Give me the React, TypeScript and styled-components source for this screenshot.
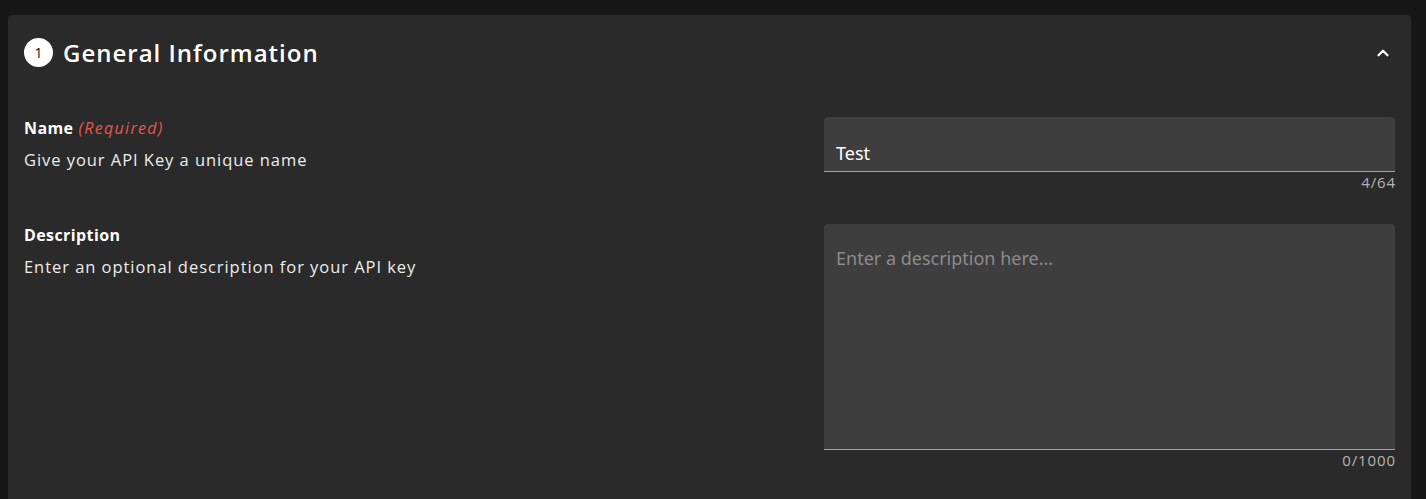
import React, { useState } from 'react'
import styled, { createGlobalStyle } from 'styled-components'
import { ChevronUp } from 'lucide-react'

const GlobalStyle = createGlobalStyle`
  html, body {
    margin: 0;
    padding: 0;
    background-color: #171717;
    font-family: 'Open Sans', 'Liberation Sans', sans-serif;
  }
  * {
    box-sizing: border-box;
  }
`

const Page = styled.div`
  padding: 15px 15px 0 8px;
  height: 499px;
  overflow: hidden;
`

const Card = styled.section`
  background-color: #2a2a2a;
  border-radius: 4px 4px 0 0;
  padding: 21px 16px 40px 16px;
  min-height: 484px;
`

const Header = styled.div`
  display: flex;
  align-items: center;
  justify-content: space-between;
  margin-bottom: 48px;
`

const TitleGroup = styled.div`
  display: flex;
  align-items: center;
  gap: 10px;
`

const StepBadge = styled.span`
  width: 29px;
  height: 29px;
  border-radius: 50%;
  background-color: #ffffff;
  color: #111;
  display: flex;
  align-items: center;
  justify-content: center;
  font-size: 14px;
  font-weight: 500;
`

const Title = styled.h2`
  margin: 0;
  font-size: 24px;
  font-weight: 600;
  line-height: 33px;
  color: #ffffff;
  letter-spacing: 1px;
`

const CollapseButton = styled.button`
  background: none;
  border: none;
  padding: 0;
  color: #ffffff;
  display: flex;
  cursor: pointer;
  margin-right: 3px;
`

const Fields = styled.div`
  display: flex;
  flex-direction: column;
  gap: 33px;
`

const FieldRow = styled.div`
  display: flex;
  justify-content: space-between;
  gap: 24px;
`

const FieldInfo = styled.div`
  display: flex;
  flex-direction: column;
  gap: 10px;
`

const Label = styled.label`
  font-size: 16px;
  font-weight: 700;
  color: #ffffff;
  line-height: 22px;
  letter-spacing: 0.4px;
`

const Required = styled.span`
  font-style: italic;
  font-weight: 400;
  color: #e5574e;
  margin-left: 5px;
  letter-spacing: 1.3px;
`

const Hint = styled.p`
  margin: 0;
  font-size: 16.5px;
  color: #ededed;
  line-height: 22px;
  letter-spacing: 0.95px;
`

const Control = styled.div`
  width: 571px;
  flex-shrink: 0;
  display: flex;
  flex-direction: column;
`

const TextInput = styled.input`
  height: 55px;
  width: 100%;
  background-color: #3e3e3e;
  border: none;
  border-bottom: 1px solid #a0a0a0;
  border-radius: 4px 4px 0 0;
  padding: 17px 12px 0 12px;
  color: #ffffff;
  font-family: 'Noto Sans', 'Open Sans', sans-serif;
  font-size: 18px;
  outline: none;
`

const TextArea = styled.textarea`
  height: 226px;
  width: 100%;
  background-color: #3e3e3e;
  border: none;
  border-bottom: 1px solid #a0a0a0;
  border-radius: 4px 4px 0 0;
  padding: 22px 12px 12px 12px;
  color: #ffffff;
  font-family: 'Noto Sans', 'Open Sans', sans-serif;
  font-size: 18px;
  resize: none;
  outline: none;

  &::placeholder {
    color: #8c8c8c;
  }
`

const Counter = styled.span`
  align-self: flex-end;
  font-size: 15px;
  color: #b4b4b4;
  line-height: 18px;
  margin-top: 1px;
  letter-spacing: 0.9px;
  margin-right: -1px;
`

export default function App() {
    const [name, setName] = useState('Test')
    const [description, setDescription] = useState('')

    return (
        <Page>
            <GlobalStyle />
            <Card>
                <Header>
                    <TitleGroup>
                        <StepBadge>1</StepBadge>
                        <Title>General Information</Title>
                    </TitleGroup>
                    <CollapseButton type="button" aria-label="Collapse">
                        <ChevronUp size={18} strokeWidth={3} />
                    </CollapseButton>
                </Header>
                <Fields>
                    <FieldRow>
                        <FieldInfo>
                            <Label htmlFor="name">
                                Name<Required>(Required)</Required>
                            </Label>
                            <Hint>Give your API Key a unique name</Hint>
                        </FieldInfo>
                        <Control>
                            <TextInput
                                id="name"
                                value={name}
                                maxLength={64}
                                onChange={(e) => setName(e.target.value)}
                            />
                            <Counter>{name.length}/64</Counter>
                        </Control>
                    </FieldRow>
                    <FieldRow>
                        <FieldInfo>
                            <Label htmlFor="description">Description</Label>
                            <Hint>Enter an optional description for your API key</Hint>
                        </FieldInfo>
                        <Control>
                            <TextArea
                                id="description"
                                value={description}
                                maxLength={1000}
                                placeholder="Enter a description here..."
                                onChange={(e) => setDescription(e.target.value)}
                            />
                            <Counter>{description.length}/1000</Counter>
                        </Control>
                    </FieldRow>
                </Fields>
            </Card>
        </Page>
    )
}
